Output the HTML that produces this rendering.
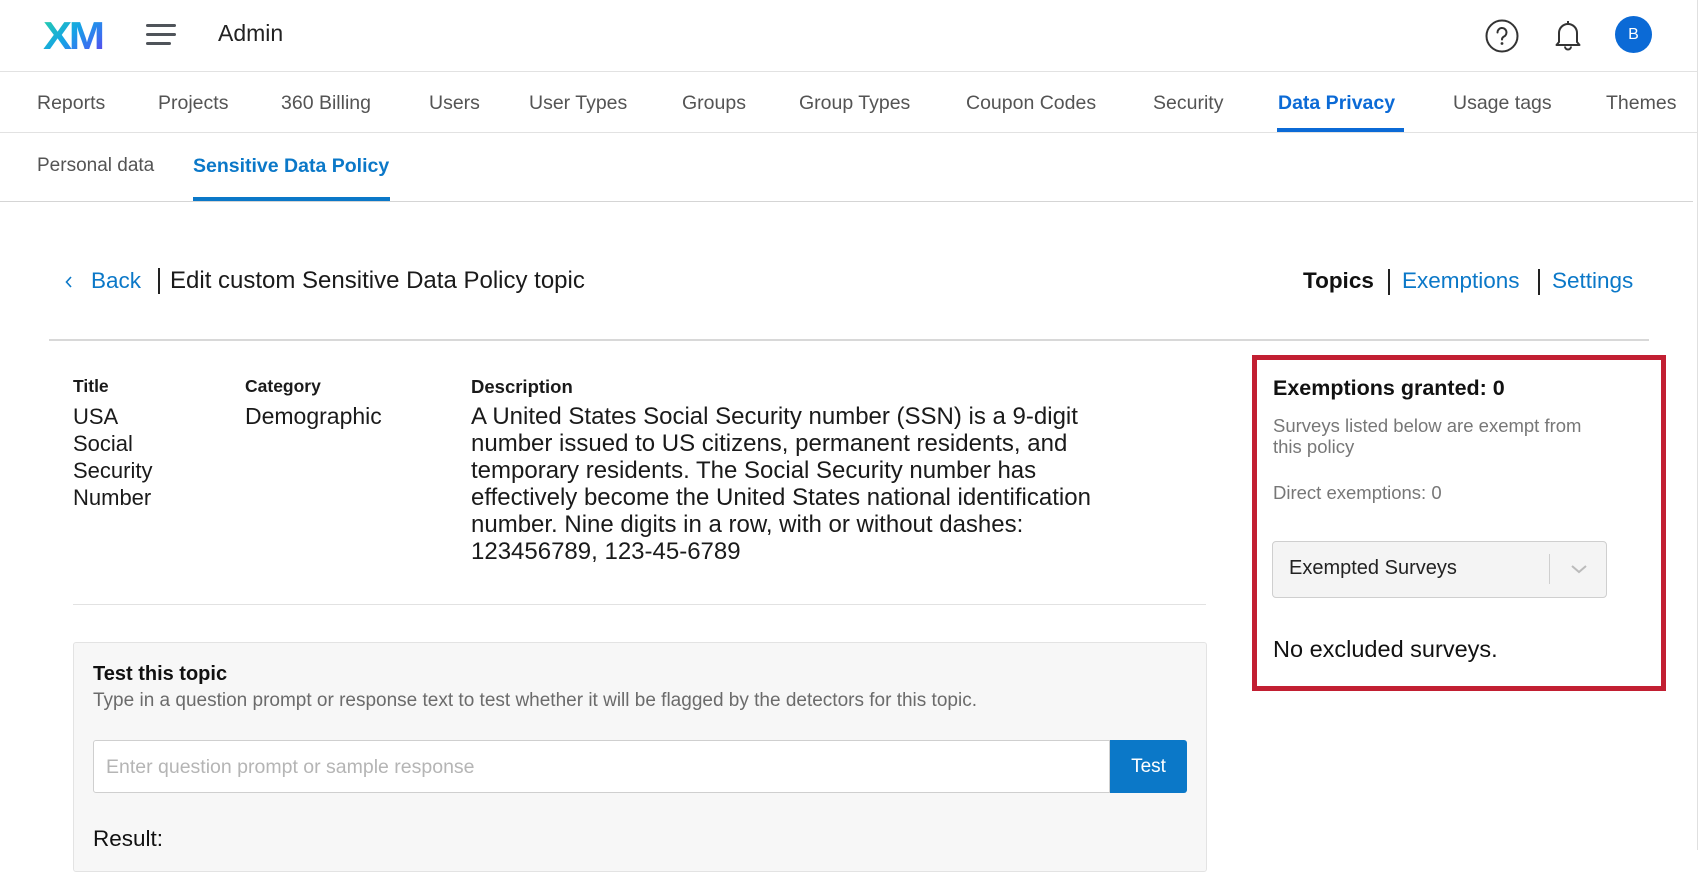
<!DOCTYPE html>
<html><head><meta charset="utf-8">
<style>
*{margin:0;padding:0;box-sizing:border-box}
body{width:1700px;height:850px;overflow:hidden;background:#fff;font-family:"Liberation Sans",Arial,sans-serif;color:#1a1a1a;position:relative}
.a{position:absolute;white-space:nowrap}
.nav{font-size:19.5px;color:#545454;top:92px}
.sub{top:155px}
.lbl{font-size:17.5px;font-weight:bold;top:376px}
.val{font-size:22px;line-height:27px;top:403px}
</style></head><body>
<!-- header -->
<div class="a" style="left:43px;top:15px;font-size:39px;font-weight:bold;letter-spacing:-3px;background:linear-gradient(135deg,#27d3a5 0%,#15a3e6 45%,#3b6ff0 75%,#6a35e8 100%);-webkit-background-clip:text;background-clip:text;color:transparent;transform:scaleX(1.12);transform-origin:left">XM</div>
<div class="a" style="left:146px;top:24px;width:30px;height:3px;background:#4f545a;border-radius:2px"></div>
<div class="a" style="left:146px;top:33px;width:30px;height:3px;background:#4f545a;border-radius:2px"></div>
<div class="a" style="left:146px;top:42px;width:25px;height:3px;background:#4f545a;border-radius:2px"></div>
<div class="a" style="left:218px;top:20px;font-size:23px;color:#222">Admin</div>
<svg class="a" style="left:1484px;top:18px" width="36" height="36" viewBox="0 0 36 36"><circle cx="18" cy="18" r="15.5" fill="none" stroke="#333" stroke-width="2"/><path d="M13.5 14.5a4.5 4.5 0 1 1 6.5 4c-1.3.7-2 1.5-2 3" fill="none" stroke="#333" stroke-width="2" stroke-linecap="round"/><circle cx="18" cy="25.5" r="1.4" fill="#333"/></svg>
<svg class="a" style="left:1552px;top:18px" width="32" height="34" viewBox="0 0 32 34"><path d="M16 3v2M7 24V15a9 9 0 0 1 18 0v9l2.5 3h-23z" fill="none" stroke="#333" stroke-width="2" stroke-linejoin="round"/><path d="M13 28.5a3 3 0 0 0 6 0" fill="none" stroke="#333" stroke-width="2"/></svg>
<div class="a" style="left:1615px;top:16px;width:37px;height:37px;border-radius:50%;background:#0b6ad6;color:#fff;font-size:16px;text-align:center;line-height:37px">B</div>
<div class="a" style="left:0;top:71px;width:1697px;height:1px;background:#e2e2e2"></div>
<div class="a" style="left:1697px;top:0;width:1px;height:850px;background:#e0e0e0"></div>
<!-- nav -->
<div class="a nav" style="left:37px">Reports</div>
<div class="a nav" style="left:158px">Projects</div>
<div class="a nav" style="left:281px">360 Billing</div>
<div class="a nav" style="left:429px">Users</div>
<div class="a nav" style="left:529px">User Types</div>
<div class="a nav" style="left:682px">Groups</div>
<div class="a nav" style="left:799px">Group Types</div>
<div class="a nav" style="left:966px">Coupon Codes</div>
<div class="a nav" style="left:1153px">Security</div>
<div class="a nav" style="left:1278px;color:#0b6ad6;font-weight:bold">Data Privacy</div>
<div class="a nav" style="left:1453px">Usage tags</div>
<div class="a nav" style="left:1606px">Themes</div>
<div class="a" style="left:1277px;top:128px;width:127px;height:4px;background:#0b6ad6"></div>
<div class="a" style="left:0;top:132px;width:1697px;height:1px;background:#e2e2e2"></div>
<!-- sub nav -->
<div class="a sub" style="left:37px;color:#545454;font-size:19px">Personal data</div>
<div class="a sub" style="left:193px;color:#0b78c8;font-weight:bold;font-size:19.5px">Sensitive Data Policy</div>
<div class="a" style="left:193px;top:197px;width:197px;height:4px;background:#0b78c8"></div>
<div class="a" style="left:0;top:201px;width:1693px;height:1px;background:#d5d5d5"></div>
<!-- back row -->
<svg class="a" style="left:64px;top:275px" width="10" height="14" viewBox="0 0 10 14"><path d="M7 2L2.5 7 7 12" fill="none" stroke="#0b78c8" stroke-width="1.6"/></svg>
<div class="a" style="left:91px;top:268px;font-size:22.5px;color:#0b78c8">Back</div>
<div class="a" style="left:158px;top:268px;width:2px;height:26px;background:#222"></div>
<div class="a" style="left:170px;top:267px;font-size:24px;color:#1a1a1a">Edit custom Sensitive Data Policy topic</div>
<div class="a" style="left:1303px;top:268px;font-size:22.5px;font-weight:bold;color:#111">Topics</div>
<div class="a" style="left:1388px;top:269px;width:2px;height:26px;background:#222"></div>
<div class="a" style="left:1402px;top:268px;font-size:22.5px;color:#0b78c8">Exemptions</div>
<div class="a" style="left:1538px;top:269px;width:2px;height:26px;background:#222"></div>
<div class="a" style="left:1552px;top:268px;font-size:22.5px;color:#0b78c8">Settings</div>
<div class="a" style="left:49px;top:339px;width:1600px;height:2px;background:#d8d8d8"></div>
<!-- details -->
<div class="a lbl" style="left:73px">Title</div>
<div class="a lbl" style="left:245px">Category</div>
<div class="a lbl" style="left:471px;font-size:18.5px">Description</div>
<div class="a val" style="left:73px">USA<br>Social<br>Security<br>Number</div>
<div class="a val" style="left:245px;font-size:23px">Demographic</div>
<div class="a val" style="left:471px;font-size:24px">A United States Social Security number (SSN) is a 9-digit<br>number issued to US citizens, permanent residents, and<br>temporary residents. The Social Security number has<br>effectively become the United States national identification<br>number. Nine digits in a row, with or without dashes:<br>123456789, 123-45-6789</div>
<div class="a" style="left:73px;top:604px;width:1133px;height:1px;background:#e2e2e2"></div>
<!-- test box -->
<div class="a" style="left:73px;top:642px;width:1134px;height:230px;background:#f7f7f7;border:1px solid #e3e3e3;border-radius:3px"></div>
<div class="a" style="left:93px;top:663px;font-size:20px;font-weight:bold;color:#111">Test this topic</div>
<div class="a" style="left:93px;top:690px;font-size:19px;color:#6b6b6b">Type in a question prompt or response text to test whether it will be flagged by the detectors for this topic.</div>
<div class="a" style="left:93px;top:740px;width:1017px;height:53px;background:#fff;border:1px solid #cfcfcf;border-radius:3px 0 0 3px"></div>
<div class="a" style="left:106px;top:756px;font-size:19.5px;color:#b5b5b5">Enter question prompt or sample response</div>
<div class="a" style="left:1110px;top:740px;width:77px;height:53px;background:#0b78c8;border-radius:0 3px 3px 0;color:#fff;font-size:19px;text-align:center;line-height:53px">Test</div>
<div class="a" style="left:93px;top:826px;font-size:22.5px;color:#111">Result:</div>
<!-- exemptions box -->
<div class="a" style="left:1252px;top:355px;width:414px;height:336px;border:5px solid #c21f32"></div>
<div class="a" style="left:1273px;top:376px;font-size:21.5px;font-weight:bold;color:#111">Exemptions granted: 0</div>
<div class="a" style="left:1273px;top:415px;font-size:18.5px;line-height:21px;color:#777">Surveys listed below are exempt from<br>this policy</div>
<div class="a" style="left:1273px;top:482px;font-size:18.5px;color:#777">Direct exemptions: 0</div>
<div class="a" style="left:1272px;top:541px;width:335px;height:57px;background:#f4f4f4;border:1px solid #cfcfcf;border-radius:4px"></div>
<div class="a" style="left:1289px;top:557px;font-size:20px;color:#222">Exempted Surveys</div>
<div class="a" style="left:1549px;top:554px;width:1px;height:30px;background:#cfcfcf"></div>
<svg class="a" style="left:1568px;top:562px" width="22" height="14" viewBox="0 0 22 14"><path d="M4 4l7 6 7-6" fill="none" stroke="#bbb" stroke-width="2"/></svg>
<div class="a" style="left:1273px;top:636px;font-size:23.5px;color:#111">No excluded surveys.</div>
</body></html>
